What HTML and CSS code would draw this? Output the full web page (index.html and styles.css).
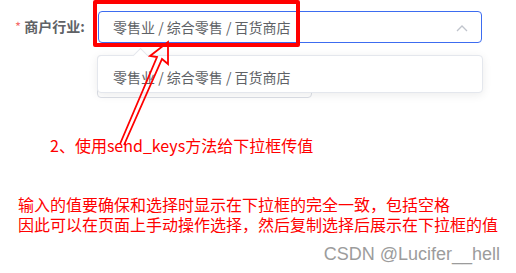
FILE: index.html
```html
<!DOCTYPE html>
<html lang="zh-CN">
<head>
  <meta charset="UTF-8">
  <meta name="viewport" content="width=device-width, initial-scale=1.0">
  <title>商户行业</title>
  <link rel="stylesheet" href="styles.css">
</head>
<body>
<div class="page">
  <div class="form-row">
    <label class="form-label"><span class="required">*</span> 商户行业:</label>
    <div class="select">
      <span class="select-value">零售业 / 综合零售 / 百货商店</span>
      <svg class="chevron" width="12" height="8" viewBox="0 0 12 8">
        <path d="M1 7 L6 2 L11 7" fill="none" stroke="#c0c4cc" stroke-width="1.3"/>
      </svg>
      <!-- 下拉面板 -->
      <div class="menu-back"></div>
      <div class="dropdown">
        <span class="popper-arrow"></span>
        <span class="option">零售业 / 综合零售 / 百货商店</span>
      </div>
    </div>
  </div>

  <p class="note step">2、使用send_keys方法给下拉框传值</p>
  <div class="tips">
    <p class="note">输入的值要确保和选择时显示在下拉框的完全一致，包括空格</p>
    <p class="note">因此可以在页面上手动操作选择，然后复制选择后展示在下拉框的值</p>
  </div>
  <div class="watermark">CSDN @Lucifer__hell</div>

  <!-- 标注 -->
  <div class="mark-box"></div>
  <svg class="mark-arrow" width="516" height="273" viewBox="0 0 516 273">
    <path d="M120 144 L157 57 L150 56 L168 42 L168 64 L162 59 L124 145" fill="none" stroke="#ff0000" stroke-width="1.8" stroke-linejoin="miter"/>
  </svg>
</div>
</body>
</html>
```

FILE: styles.css
```css
body {
  margin: 0;
  background-color: #fff;
  font-family: "Noto Sans CJK SC", "Open Sans", sans-serif;
}
.page {
  position: relative;
  width: 516px;
  height: 273px;
  overflow: hidden;
}
.form-row {
  display: flex;
  align-items: center;
  padding: 10px 0 0 15px;
}
.form-label {
  flex: none;
  width: 83px;
  font-size: 14px;
  font-weight: bold;
  color: #606266;
  line-height: 32px;
}
.required {
  color: #f56c6c;
  font-weight: normal;
  font-size: 13px;
}
.select {
  position: relative;
  box-sizing: border-box;
  width: 384px;
  height: 32px;
  border: 1px solid #3d6cf0;
  border-radius: 4px;
  display: flex;
  align-items: center;
  padding-left: 14px;
}
.select-value,
.option {
  font-size: 14px;
  color: #606266;
  white-space: nowrap;
}
.chevron {
  position: absolute;
  right: 13px;
  top: 12px;
}
.menu-back {
  position: absolute;
  left: -2px;
  top: 43px;
  width: 215px;
  height: 43px;
  box-sizing: border-box;
  border: 1px solid #dcdfe6;
  border-radius: 4px;
  background-color: #fff;
}
.dropdown {
  position: absolute;
  left: -2px;
  top: 43px;
  box-sizing: border-box;
  width: 386px;
  height: 38px;
  border: 1px solid #e4e7ed;
  border-radius: 4px;
  background-color: #fff;
  box-shadow: 0 2px 10px rgba(0,0,0,0.08);
  display: flex;
  align-items: center;
  padding: 6px 0 0 15px;
}
.popper-arrow {
  position: absolute;
  left: 37px;
  top: -6px;
  width: 10px;
  height: 10px;
  background-color: #fff;
  border-left: 1px solid #e4e7ed;
  border-top: 1px solid #e4e7ed;
  transform: rotate(45deg);
}
.note {
  margin: 0;
  color: #ff0000;
  font-size: 16px;
  line-height: 20px;
  height: 20px;
  white-space: nowrap;
}
.step {
  margin-top: 92px;
  padding-left: 50px;
}
.tips {
  margin-top: 39px;
  padding-left: 18px;
}
.watermark {
  margin-top: 9px;
  padding-right: 16px;
  text-align: right;
  font-family: "Liberation Sans", Arial, sans-serif;
  font-size: 18px;
  line-height: 22px;
  color: #9c9c9c;
}
.mark-box {
  position: absolute;
  left: 93px;
  top: 0;
  width: 207px;
  height: 47px;
  box-sizing: border-box;
  border: 4.5px solid #ff0000;
  border-radius: 2px;
}
.mark-arrow {
  position: absolute;
  left: 0;
  top: 0;
  pointer-events: none;
}
```
